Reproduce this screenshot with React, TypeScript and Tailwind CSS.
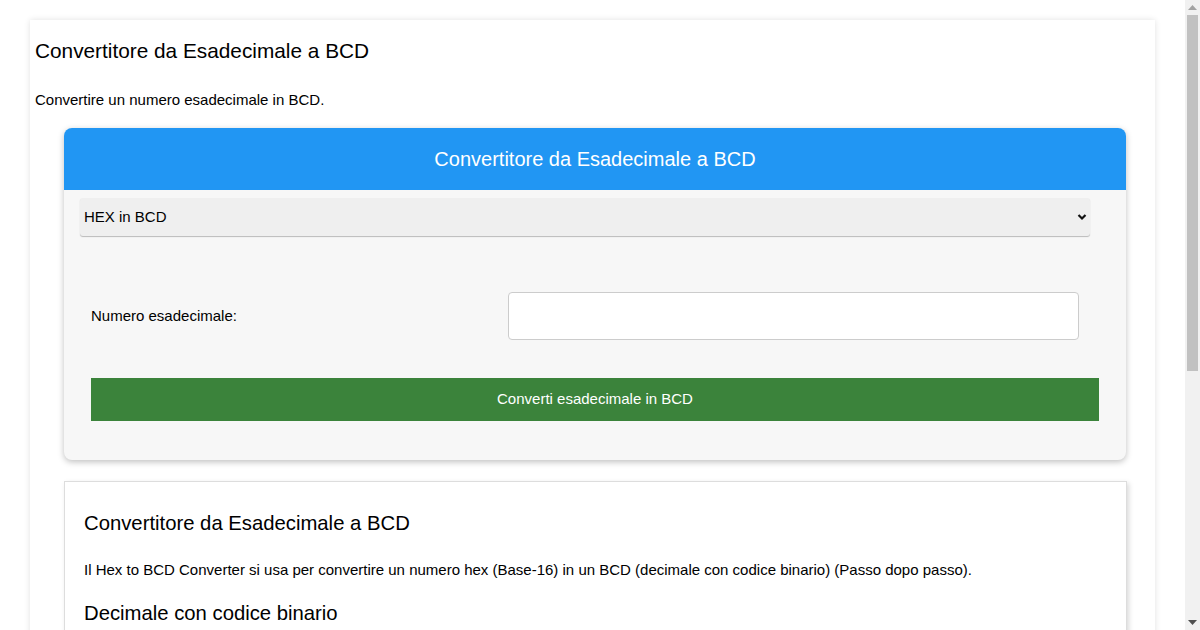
import React from "react";

function Scrollbar() {
  return (
    <div className="flex h-screen w-[15px] shrink-0 flex-col items-center bg-[#f1f1f1]">
      <div className="flex h-[15px] w-full items-center justify-center">
        <svg width="9" height="5" viewBox="0 0 9 5">
          <path d="M0 5L4.5 0L9 5Z" fill="#a3a3a3" />
        </svg>
      </div>
      <div className="h-[356px] w-[11px] bg-[#c1c1c1]" />
      <div className="flex-1" />
      <div className="flex h-[15px] w-full items-center justify-center">
        <svg width="9" height="5" viewBox="0 0 9 5">
          <path d="M0 0L4.5 5L9 0Z" fill="#505050" />
        </svg>
      </div>
    </div>
  );
}

export default function App() {
  return (
    <div className="flex h-screen overflow-hidden bg-white font-['Liberation_Sans',Arial,sans-serif] text-black">
      <div className="min-w-0 flex-1 overflow-hidden">
        <div className="px-[30px] pt-[20px] pb-[40px]">
          <div className="bg-white px-[5px] pt-[19px] pb-[40px] shadow-[0_0_6px_rgba(0,0,0,0.12)]">
            <h1 className="text-[20.8px] leading-[24px]">Convertitore da Esadecimale a BCD</h1>
            <p className="mt-[28px] text-[15px] leading-[18px]">Convertire un numero esadecimale in BCD.</p>

            <div className="ml-[29px] mr-[24px] mt-[19px] rounded-lg bg-[#f7f7f7] shadow-[0_2px_6px_rgba(0,0,0,0.25)]">
              <div className="flex h-[62px] items-center justify-center rounded-t-lg bg-[#2196f3] text-[20px] text-white">
                Convertitore da Esadecimale a BCD
              </div>
              <div className="px-[16px] pt-[8px] pb-[39px]">
                <div className="mr-[20px] flex h-[38px] items-center justify-between rounded-[3px] bg-[#efefef] pl-[4px] pr-[2px] text-[15px] shadow-[0_1px_1px_rgba(0,0,0,0.25)]">
                  <span>HEX in BCD</span>
                  <svg width="12" height="12" viewBox="0 0 12 12">
                    <path d="M2.5 4l3.5 3.5L9.5 4" fill="none" stroke="#111" strokeWidth="2.2" />
                  </svg>
                </div>

                <div className="mt-[56px] flex items-center pl-[11px]">
                  <label className="w-[417px] text-[15px]">Numero esadecimale:</label>
                  <input
                    type="text"
                    className="h-[48px] w-[571px] rounded-[4px] border border-[#cccccc] bg-white px-3 text-[15px] outline-none"
                  />
                </div>

                <button className="mt-[38px] ml-[11px] flex h-[43px] w-[1008px] items-center justify-center bg-[#3b833b] text-[15px] text-white">
                  Converti esadecimale in BCD
                </button>
              </div>
            </div>

            <div className="ml-[29px] mr-[23px] mt-[21px] border border-[#dddddd] bg-white px-[19px] pt-[29px] pb-[30px] shadow-[2px_2px_5px_rgba(0,0,0,0.15)]">
              <h2 className="text-[20.3px] leading-[24px]">Convertitore da Esadecimale a BCD</h2>
              <p className="mt-[26px] text-[15px] leading-[18px]">
                Il Hex to BCD Converter si usa per convertire un numero hex (Base-16) in un BCD (decimale con codice binario) (Passo dopo passo).
              </p>
              <h3 className="mt-[22px] text-[20.3px] leading-[24px]">Decimale con codice binario</h3>
            </div>
          </div>
        </div>
      </div>
      <Scrollbar />
    </div>
  );
}
